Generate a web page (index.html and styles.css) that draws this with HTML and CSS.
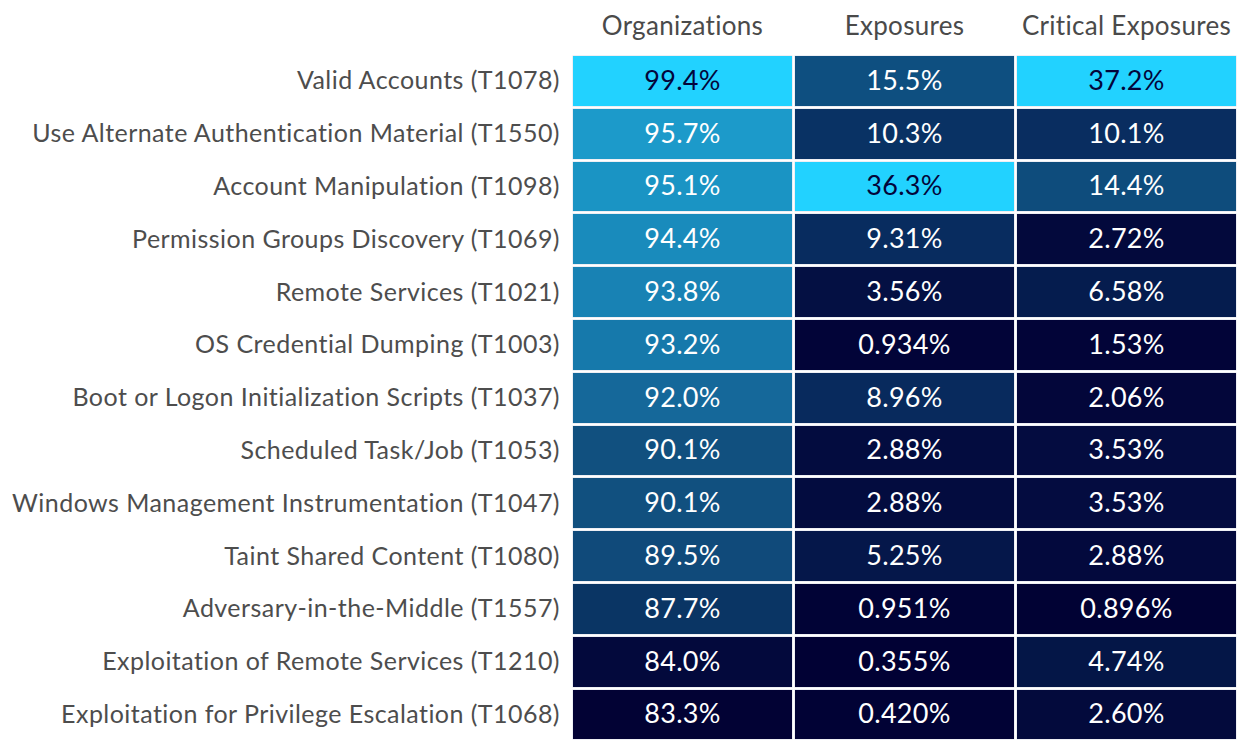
FILE: index.html
```html
<!DOCTYPE html>
<html lang="en">
<head>
<meta charset="utf-8">
<title>Techniques heatmap</title>
<link rel="stylesheet" href="styles.css">
</head>
<body>
<div class="heatmap">
  <div class="corner"></div>
  <div class="head">Organizations</div>
  <div class="head">Exposures</div>
  <div class="head">Critical Exposures</div>

  <div class="label">Valid Accounts (T1078)</div>
  <div class="cell light" style="background:rgb(34,210,255)">99.4%</div>
  <div class="cell" style="background:rgb(14,79,128)">15.5%</div>
  <div class="cell light" style="background:rgb(34,210,255)">37.2%</div>

  <div class="label">Use Alternate Authentication Material (T1550)</div>
  <div class="cell" style="background:rgb(28,154,202)">95.7%</div>
  <div class="cell" style="background:rgb(9,50,100)">10.3%</div>
  <div class="cell" style="background:rgb(9,45,96)">10.1%</div>

  <div class="label">Account Manipulation (T1098)</div>
  <div class="cell" style="background:rgb(26,148,196)">95.1%</div>
  <div class="cell light" style="background:rgb(34,210,255)">36.3%</div>
  <div class="cell" style="background:rgb(14,76,124)">14.4%</div>

  <div class="label">Permission Groups Discovery (T1069)</div>
  <div class="cell" style="background:rgb(25,139,188)">94.4%</div>
  <div class="cell" style="background:rgb(8,44,95)">9.31%</div>
  <div class="cell" style="background:rgb(3,9,60)">2.72%</div>

  <div class="label">Remote Services (T1021)</div>
  <div class="cell" style="background:rgb(24,130,180)">93.8%</div>
  <div class="cell" style="background:rgb(4,16,67)">3.56%</div>
  <div class="cell" style="background:rgb(5,28,78)">6.58%</div>

  <div class="label">OS Credential Dumping (T1003)</div>
  <div class="cell" style="background:rgb(22,121,171)">93.2%</div>
  <div class="cell" style="background:rgb(2,4,56)">0.934%</div>
  <div class="cell" style="background:rgb(2,4,56)">1.53%</div>

  <div class="label">Boot or Logon Initialization Scripts (T1037)</div>
  <div class="cell" style="background:rgb(21,104,154)">92.0%</div>
  <div class="cell" style="background:rgb(8,42,93)">8.96%</div>
  <div class="cell" style="background:rgb(3,6,58)">2.06%</div>

  <div class="label">Scheduled Task/Job (T1053)</div>
  <div class="cell" style="background:rgb(17,80,127)">90.1%</div>
  <div class="cell" style="background:rgb(3,12,63)">2.88%</div>
  <div class="cell" style="background:rgb(4,12,64)">3.53%</div>

  <div class="label">Windows Management Instrumentation (T1047)</div>
  <div class="cell" style="background:rgb(17,80,127)">90.1%</div>
  <div class="cell" style="background:rgb(3,12,63)">2.88%</div>
  <div class="cell" style="background:rgb(4,12,64)">3.53%</div>

  <div class="label">Taint Shared Content (T1080)</div>
  <div class="cell" style="background:rgb(16,74,122)">89.5%</div>
  <div class="cell" style="background:rgb(5,23,74)">5.25%</div>
  <div class="cell" style="background:rgb(3,9,61)">2.88%</div>

  <div class="label">Adversary-in-the-Middle (T1557)</div>
  <div class="cell" style="background:rgb(10,53,100)">87.7%</div>
  <div class="cell" style="background:rgb(1,3,54)">0.951%</div>
  <div class="cell" style="background:rgb(1,2,52)">0.896%</div>

  <div class="label">Exploitation of Remote Services (T1210)</div>
  <div class="cell" style="background:rgb(3,9,60)">84.0%</div>
  <div class="cell" style="background:rgb(1,1,52)">0.355%</div>
  <div class="cell" style="background:rgb(4,22,71)">4.74%</div>

  <div class="label">Exploitation for Privilege Escalation (T1068)</div>
  <div class="cell" style="background:rgb(2,2,52)">83.3%</div>
  <div class="cell" style="background:rgb(1,2,53)">0.420%</div>
  <div class="cell" style="background:rgb(3,10,60)">2.60%</div>
</div>
</body>
</html>
```
FILE: styles.css
```css
html, body {
  margin: 0;
  padding: 0;
  background: #ffffff;
}

body {
  font-family: "Lato", "Open Sans", "Noto Sans", sans-serif;
  width: 1248px;
  height: 752px;
  overflow: hidden;
}

.heatmap {
  display: grid;
  grid-template-columns: 570px 219px 219px 219px;
  grid-template-rows: 53px repeat(13, 49.8px);
  column-gap: 3px;
  row-gap: 3px;
}

.head {
  display: flex;
  align-items: center;
  justify-content: center;
  padding-bottom: 4px;
  font-size: 26px;
  letter-spacing: 0.3px;
  color: #4a4a4a;
  white-space: nowrap;
}

.label {
  display: flex;
  align-items: center;
  justify-content: flex-end;
  padding-right: 10px;
  padding-bottom: 3px;
  font-size: 25px;
  letter-spacing: 0.45px;
  color: #4d4d4d;
  white-space: nowrap;
}

.cell {
  display: flex;
  align-items: center;
  justify-content: center;
  padding-bottom: 3px;
  font-size: 27px;
  letter-spacing: 0.3px;
  color: #ffffff;
  box-shadow: 0 0 0 0.5px rgba(200, 205, 220, 0.6);
}

.cell.light {
  color: #03053a;
}
```
